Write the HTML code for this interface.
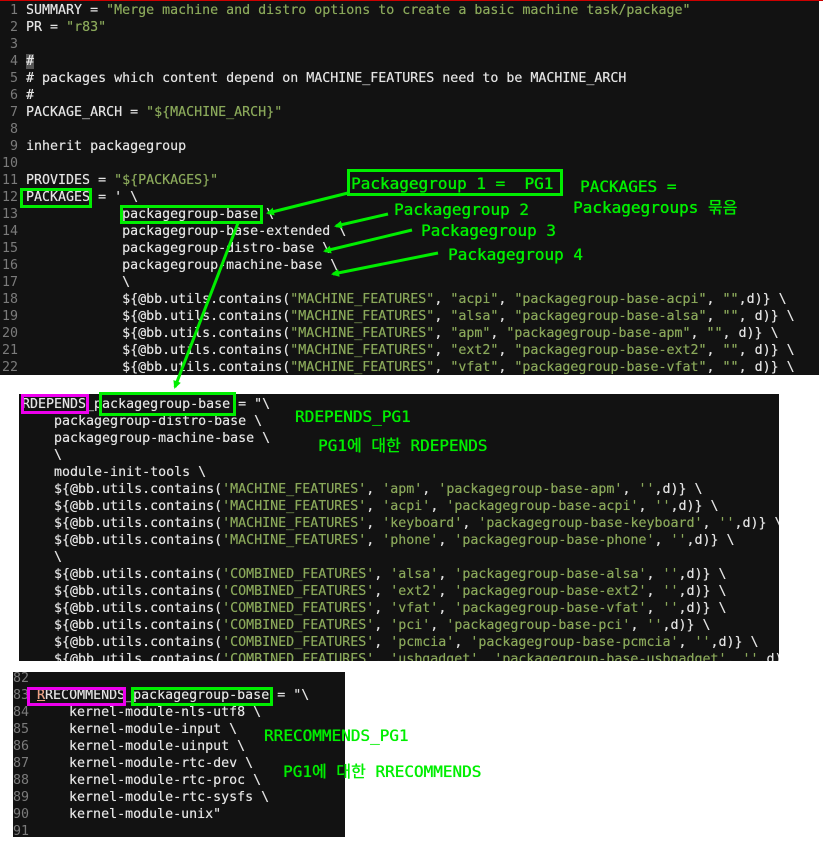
<!DOCTYPE html>
<html><head><meta charset="utf-8"><style>
body{margin:0;width:823px;height:846px;background:#fff;position:relative;overflow:hidden}
.p{position:absolute;background:#121212;overflow:hidden}
pre{margin:0;position:absolute;font-family:"DejaVu Sans Mono","Liberation Mono",monospace;font-size:13.3px;line-height:17px;color:#e4e4e4;text-shadow:0 0 0.4px #e4e4e4}
.s{color:#8aa85a;text-shadow:0 0 0.4px #8aa85a}.n{color:#7b7b7b;text-shadow:none}
.a{position:absolute;font-family:"DejaVu Sans Mono","Noto Sans CJK KR",monospace;font-size:16px;color:#00ee00;white-space:pre;line-height:18px;text-shadow:0 0 0.5px #00ee00,0.3px 0 0 #00ee00}
.b{position:absolute;border:3px solid #00ee00;box-sizing:border-box}
.m{position:absolute;border:3px solid #ee00ee;box-sizing:border-box}
</style></head><body>
<div style="position:absolute;left:0;top:0;width:823px;height:1px;background:#c00"></div>
<div class="p" style="left:0;top:1px;width:819px;height:374px">
<pre style="left:2px;top:1px"><span class="n"> 1</span> SUMMARY = <span class="s">"Merge machine and distro options to create a basic machine task/package"</span>
<span class="n"> 2</span> PR = <span class="s">"r83"</span>
<span class="n"> 3</span>
<span class="n"> 4</span> <span style="background:#555">#</span>
<span class="n"> 5</span> # packages which content depend on MACHINE_FEATURES need to be MACHINE_ARCH
<span class="n"> 6</span> #
<span class="n"> 7</span> PACKAGE_ARCH = <span class="s">"${MACHINE_ARCH}"</span>
<span class="n"> 8</span>
<span class="n"> 9</span> inherit packagegroup
<span class="n">10</span>
<span class="n">11</span> PROVIDES = <span class="s">"${PACKAGES}"</span>
<span class="n">12</span> PACKAGES = ' \
<span class="n">13</span>             packagegroup-base \
<span class="n">14</span>             packagegroup-base-extended \
<span class="n">15</span>             packagegroup-distro-base \
<span class="n">16</span>             packagegroup-machine-base \
<span class="n">17</span>             \
<span class="n">18</span>             ${@bb.utils.contains(<span class="s">"MACHINE_FEATURES"</span>, <span class="s">"acpi"</span>, <span class="s">"packagegroup-base-acpi"</span>, <span class="s">""</span>,d)} \
<span class="n">19</span>             ${@bb.utils.contains(<span class="s">"MACHINE_FEATURES"</span>, <span class="s">"alsa"</span>, <span class="s">"packagegroup-base-alsa"</span>, <span class="s">""</span>, d)} \
<span class="n">20</span>             ${@bb.utils.contains(<span class="s">"MACHINE_FEATURES"</span>, <span class="s">"apm"</span>, <span class="s">"packagegroup-base-apm"</span>, <span class="s">""</span>, d)} \
<span class="n">21</span>             ${@bb.utils.contains(<span class="s">"MACHINE_FEATURES"</span>, <span class="s">"ext2"</span>, <span class="s">"packagegroup-base-ext2"</span>, <span class="s">""</span>, d)} \
<span class="n">22</span>             ${@bb.utils.contains(<span class="s">"MACHINE_FEATURES"</span>, <span class="s">"vfat"</span>, <span class="s">"packagegroup-base-vfat"</span>, <span class="s">""</span>, d)} \</pre>
</div>
<div class="p" style="left:19px;top:394px;width:760px;height:267px">
<pre style="left:3px;top:2px">RDEPENDS_packagegroup-base = "\
    packagegroup-distro-base \
    packagegroup-machine-base \
    \
    module-init-tools \
    ${@bb.utils.contains(<span class="s">'MACHINE_FEATURES'</span>, <span class="s">'apm'</span>, <span class="s">'packagegroup-base-apm'</span>, <span class="s">''</span>,d)} \
    ${@bb.utils.contains(<span class="s">'MACHINE_FEATURES'</span>, <span class="s">'acpi'</span>, <span class="s">'packagegroup-base-acpi'</span>, <span class="s">''</span>,d)} \
    ${@bb.utils.contains(<span class="s">'MACHINE_FEATURES'</span>, <span class="s">'keyboard'</span>, <span class="s">'packagegroup-base-keyboard'</span>, <span class="s">''</span>,d)} \
    ${@bb.utils.contains(<span class="s">'MACHINE_FEATURES'</span>, <span class="s">'phone'</span>, <span class="s">'packagegroup-base-phone'</span>, <span class="s">''</span>,d)} \
    \
    ${@bb.utils.contains(<span class="s">'COMBINED_FEATURES'</span>, <span class="s">'alsa'</span>, <span class="s">'packagegroup-base-alsa'</span>, <span class="s">''</span>,d)} \
    ${@bb.utils.contains(<span class="s">'COMBINED_FEATURES'</span>, <span class="s">'ext2'</span>, <span class="s">'packagegroup-base-ext2'</span>, <span class="s">''</span>,d)} \
    ${@bb.utils.contains(<span class="s">'COMBINED_FEATURES'</span>, <span class="s">'vfat'</span>, <span class="s">'packagegroup-base-vfat'</span>, <span class="s">''</span>,d)} \
    ${@bb.utils.contains(<span class="s">'COMBINED_FEATURES'</span>, <span class="s">'pci'</span>, <span class="s">'packagegroup-base-pci'</span>, <span class="s">''</span>,d)} \
    ${@bb.utils.contains(<span class="s">'COMBINED_FEATURES'</span>, <span class="s">'pcmcia'</span>, <span class="s">'packagegroup-base-pcmcia'</span>, <span class="s">''</span>,d)} \
    ${@bb.utils.contains(<span class="s">'COMBINED_FEATURES'</span>, <span class="s">'usbgadget'</span>, <span class="s">'packagegroup-base-usbgadget'</span>, <span class="s">''</span>,d)} \</pre>
</div>
<div class="p" style="left:13px;top:672px;width:332px;height:165px">
<pre style="left:0px;top:-2px"><span class="n">82</span>
<span class="n">83</span> <span style="color:#f0a080;text-decoration:underline">R</span>RECOMMENDS_packagegroup-base = "\
<span class="n">84</span>     kernel-module-nls-utf8 \
<span class="n">85</span>     kernel-module-input \
<span class="n">86</span>     kernel-module-uinput \
<span class="n">87</span>     kernel-module-rtc-dev \
<span class="n">88</span>     kernel-module-rtc-proc \
<span class="n">89</span>     kernel-module-rtc-sysfs \
<span class="n">90</span>     kernel-module-unix"
<span class="n">91</span></pre>
</div>
<!-- boxes -->
<div class="b" style="left:20px;top:188px;width:72px;height:20px"></div>
<div class="b" style="left:120px;top:205px;width:143px;height:19px"></div>
<div class="b" style="left:347px;top:169px;width:216px;height:27px"></div>
<div class="m" style="left:21px;top:394px;width:68px;height:20px"></div>
<div class="b" style="left:99px;top:392px;width:137px;height:24px"></div>
<div class="m" style="left:27px;top:687px;width:99px;height:19px"></div>
<div class="b" style="left:131px;top:687px;width:142px;height:19px"></div>
<!-- annotations -->
<div class="a" style="left:351px;top:175px">Packagegroup 1 =  PG1</div>
<div class="a" style="left:580px;top:178px">PACKAGES =</div>
<div class="a" style="left:573px;top:199px">Packagegroups 묶음</div>
<div class="a" style="left:394px;top:201px">Packagegroup 2</div>
<div class="a" style="left:421px;top:222px">Packagegroup 3</div>
<div class="a" style="left:448px;top:246px">Packagegroup 4</div>
<div class="a" style="left:295px;top:408px">RDEPENDS_PG1</div>
<div class="a" style="left:318px;top:437px">PG1에 대한 RDEPENDS</div>
<div class="a" style="left:264px;top:727px">RRECOMMENDS_PG1</div>
<div class="a" style="left:283px;top:763px">PG1에 대한 RRECOMMENDS</div>
<svg style="position:absolute;left:0;top:0" width="823" height="846">
<defs><marker id="h" markerWidth="8" markerHeight="8" refX="6" refY="4" orient="auto" markerUnits="userSpaceOnUse"><path d="M0,0 L8,4 L0,8 Z" fill="#00ee00"/></marker></defs>
<g stroke="#00ee00" stroke-width="3" fill="none">
<line x1="348" y1="193" x2="268" y2="213" marker-end="url(#h)"/>
<line x1="388" y1="214" x2="336" y2="226" marker-end="url(#h)"/>
<line x1="412" y1="230" x2="325" y2="251" marker-end="url(#h)"/>
<line x1="438" y1="253" x2="333" y2="274" marker-end="url(#h)"/>
<line x1="238" y1="223" x2="175" y2="387" marker-end="url(#h)"/>
</g></svg>
</body></html>
